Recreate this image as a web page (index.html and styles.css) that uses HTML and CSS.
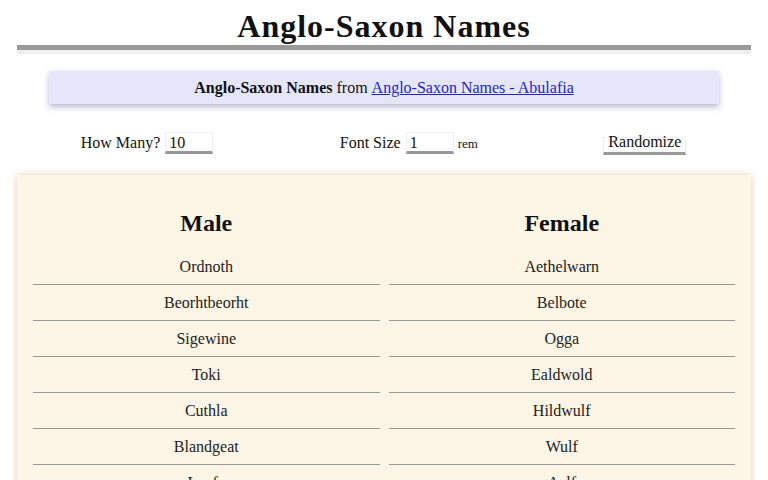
FILE: index.html
```html
<!DOCTYPE html>
<html>
<head>
<meta charset="utf-8">
<link rel="stylesheet" href="styles.css">
</head>
<body>
<div class="page">
  <header class="masthead">
    <h1 class="title">Anglo-Saxon Names</h1>
  </header>
  <div class="banner">
    <b>Anglo-Saxon Names</b> from <a href="#">Anglo-Saxon Names - Abulafia</a>
  </div>
  <div class="controls">
    <label class="field">How Many? <input class="num" type="text" value="10"></label>
    <label class="field">Font Size <input class="num" type="text" value="1"> <span class="unit">rem</span></label>
    <button class="btn">Randomize</button>
  </div>
  <main class="card">
    <section class="col">
      <h2 class="col-title">Male</h2>
      <div class="name">Ordnoth</div>
      <div class="name">Beorhtbeorht</div>
      <div class="name">Sigewine</div>
      <div class="name">Toki</div>
      <div class="name">Cuthla</div>
      <div class="name">Blandgeat</div>
      <div class="name">Leofa</div>
    </section>
    <section class="col">
      <h2 class="col-title">Female</h2>
      <div class="name">Aethelwarn</div>
      <div class="name">Belbote</div>
      <div class="name">Ogga</div>
      <div class="name">Ealdwold</div>
      <div class="name">Hildwulf</div>
      <div class="name">Wulf</div>
      <div class="name">Aelf</div>
    </section>
  </main>
</div>
</body>
</html>
```
FILE: styles.css
```css
html, body {
  margin: 0;
  padding: 0;
  background: #fff;
}
body {
  font-family: "Liberation Serif", "Times New Roman", serif;
  font-size: 16px;
  color: #111;
}
.page {
  padding: 0 17px;
}
.masthead {
  padding-top: 9px;
}
.title {
  margin: 0;
  font-size: 32px;
  line-height: 35px;
  letter-spacing: 1px;
  text-align: center;
  padding-bottom: 1px;
  border-bottom: 5px solid #999;
  box-shadow: 0 4px 0 #eee;
}
.banner {
  margin: 21px 32px 0;
  height: 33px;
  display: flex;
  align-items: center;
  justify-content: center;
  background: #e6e6fb;
  box-shadow: 0 3px 6px rgba(60, 60, 120, 0.35);
}
.banner b {
  margin-right: 4px;
}
.banner a {
  margin-left: 4px;
  color: #2323d6;
}
.controls {
  margin-top: 28px;
  display: flex;
  justify-content: space-around;
  align-items: flex-start;
  height: 22px;
}
.field {
  display: flex;
  align-items: baseline;
  gap: 5px;
  padding-left: 1px;
}
.num {
  width: 48px;
  height: 22px;
  box-sizing: border-box;
  border: 1px solid #eee;
  border-bottom: 3px solid #999;
  padding: 1px 3px 0;
  font-family: "Liberation Serif", serif;
  font-size: 16px;
  color: #111;
  background: #fff;
  outline: none;
}
.unit {
  font-size: 13px;
  margin-left: -1px;
}
.btn {
  margin-top: 5px;
  height: 18px;
  box-sizing: border-box;
  border: 1px solid #eee;
  border-bottom: 3px solid #999;
  background: #fff;
  padding: 0 4px 7px;
  margin-right: 2px;
  font-family: "Liberation Serif", serif;
  font-size: 16px;
  color: #111;
  line-height: 7px;
}
.card {
  margin-top: 21px;
  background: #fdf5e6;
  box-shadow: 0 0 7px rgba(140, 100, 40, 0.3);
  padding: 16px 16px 24px;
  display: grid;
  grid-template-columns: 1fr 1fr;
  column-gap: 9px;
}
.col {
  display: flex;
  flex-direction: column;
}
.col-title {
  margin: 18px 0 12px;
  font-size: 24px;
  line-height: 28px;
  text-align: center;
}
.name {
  text-align: center;
  padding: 8px 0;
  line-height: 19px;
  border-bottom: 1px solid #999;
  color: #222;
}
```
